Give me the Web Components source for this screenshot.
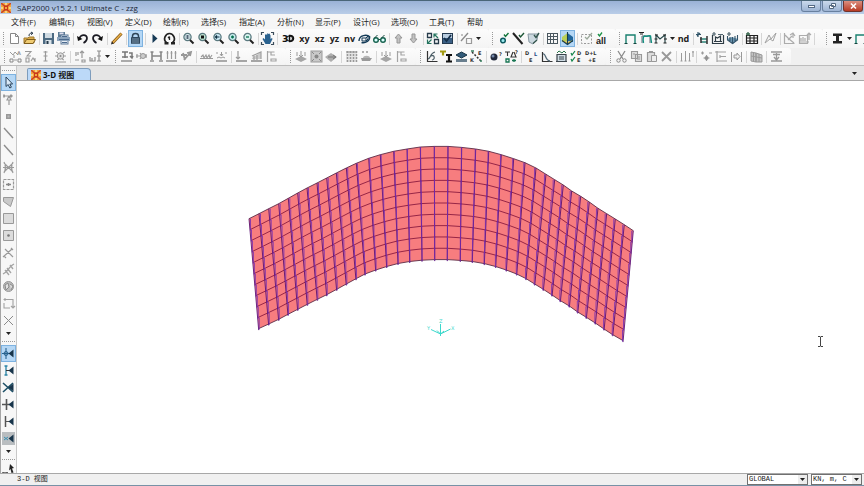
<!DOCTYPE html>
<html lang="zh-CN">
<head>
<meta charset="utf-8">
<title>SAP2000 v15.2.1 Ultimate C - zzg</title>
<style>
    html, body { margin: 0; height: 100%; }
    body {
        font-family: "Open Sans", "Noto Sans CJK SC", sans-serif;
        font-size: 8px;
        color: #222;
        background: #f1f1f1;
        overflow: hidden;
    }
</style>
</head>
<body>
<sap-app>
    <title-bar slot="top">SAP2000 v15.2.1 Ultimate C - zzg</title-bar>
    <menu-bar slot="top">
        <menu-item>文件(F)</menu-item>
        <menu-item>编辑(E)</menu-item>
        <menu-item>视图(V)</menu-item>
        <menu-item>定义(D)</menu-item>
        <menu-item>绘制(R)</menu-item>
        <menu-item>选择(S)</menu-item>
        <menu-item>指定(A)</menu-item>
        <menu-item>分析(N)</menu-item>
        <menu-item>显示(P)</menu-item>
        <menu-item>设计(G)</menu-item>
        <menu-item>选项(O)</menu-item>
        <menu-item>工具(T)</menu-item>
        <menu-item>帮助</menu-item>
    </menu-bar>

    <tool-row slot="top">
        <tool-group>
            <tool-button icon="new"></tool-button><tool-button icon="open"></tool-button>
            <tool-sep></tool-sep>
            <tool-button icon="save"></tool-button><tool-button icon="print"></tool-button>
            <tool-sep></tool-sep>
            <tool-button icon="undo"></tool-button><tool-button icon="redo"></tool-button>
            <tool-sep></tool-sep>
            <tool-button icon="pencil"></tool-button>
            <tool-sep></tool-sep>
            <tool-button icon="lock" active></tool-button>
            <tool-sep></tool-sep>
            <tool-button icon="run"></tool-button><tool-button icon="refresh"></tool-button>
            <tool-sep></tool-sep>
            <tool-button icon="zoomwin"></tool-button><tool-button icon="zoomfull"></tool-button><tool-button icon="zoomprev"></tool-button><tool-button icon="zoomin"></tool-button><tool-button icon="zoomout"></tool-button>
            <tool-sep></tool-sep>
            <tool-button icon="pan"></tool-button>
            <tool-sep></tool-sep>
            <tool-button icon="v3d" wide></tool-button>
            <tool-button label="xy view">xy</tool-button><tool-button label="xz view">xz</tool-button><tool-button label="yz view">yz</tool-button><tool-button label="named view">nv</tool-button>
            <tool-button icon="rotate"></tool-button><tool-button icon="glasses"></tool-button>
            <tool-sep></tool-sep>
            <tool-button icon="up"></tool-button><tool-button icon="down"></tool-button>
            <tool-sep></tool-sep>
            <tool-button icon="shrink"></tool-button><tool-button icon="options"></tool-button>
            <tool-sep></tool-sep>
            <tool-button icon="assign"></tool-button><drop-mark></drop-mark>
        </tool-group>
        <tool-group>
            <tool-button icon="snapjoint"></tool-button><tool-button icon="snapline"></tool-button><tool-button icon="snaparea"></tool-button>
            <tool-sep></tool-sep>
            <tool-button icon="grid"></tool-button><tool-button icon="cube" active></tool-button>
            <tool-sep></tool-sep>
            <tool-button icon="selbox"></tool-button><tool-button icon="all"></tool-button>
        </tool-group>
        <tool-group>
            <tool-button icon="frame"></tool-button><tool-button icon="deform"></tool-button><tool-button icon="forces"></tool-button><drop-mark></drop-mark>
            <tool-button label="named display">nd</tool-button>
            <tool-sep></tool-sep>
            <tool-button icon="disp1"></tool-button><tool-button icon="disp2"></tool-button><tool-button icon="disp3"></tool-button>
            <tool-sep></tool-sep>
            <tool-button icon="table"></tool-button>
            <tool-sep></tool-sep>
            <tool-button icon="flash"></tool-button>
            <tool-sep></tool-sep>
            <tool-button icon="graph1"></tool-button><tool-button icon="graph2"></tool-button>
            <tool-sep></tool-sep>
        </tool-group>
        <tool-group>
            <tool-button icon="ibeam"></tool-button><drop-mark></drop-mark>
            <tool-button icon="frame"></tool-button>
        </tool-group>
    </tool-row>

    <tool-row slot="top" second>
        <tool-group tight>
            <tool-button icon="g1"></tool-button><tool-button icon="g2"></tool-button><tool-button icon="g3"></tool-button><tool-button icon="g4"></tool-button>
            <tool-sep></tool-sep>
            <tool-button icon="g5"></tool-button><tool-button icon="g6"></tool-button><drop-mark></drop-mark>
        </tool-group>
        <tool-group>
            <tool-button icon="h1"></tool-button><tool-button icon="h2"></tool-button><tool-button icon="h3"></tool-button><tool-button icon="h4"></tool-button><tool-button icon="h5"></tool-button>
            <tool-sep></tool-sep>
            <tool-button icon="h6"></tool-button><tool-button icon="h7"></tool-button>
            <tool-sep></tool-sep>
            <tool-button icon="h8"></tool-button><tool-button icon="h9"></tool-button><tool-button icon="h10"></tool-button>
        </tool-group>
        <tool-group>
            <tool-button icon="a1"></tool-button><tool-button icon="a2"></tool-button><tool-button icon="a3"></tool-button>
            <tool-sep></tool-sep>
            <tool-button icon="a4"></tool-button><tool-button icon="a5"></tool-button>
            <tool-sep></tool-sep>
            <tool-button icon="a1"></tool-button><tool-button icon="h10"></tool-button>
        </tool-group>
        <tool-group>
            <tool-button icon="m1"></tool-button><tool-button icon="m2"></tool-button><tool-button icon="m3"></tool-button><tool-button icon="m4"></tool-button>
            <tool-sep></tool-sep>
            <tool-button icon="m5"></tool-button><tool-button icon="m6"></tool-button>
            <tool-sep></tool-sep>
            <tool-button icon="m7"></tool-button><tool-button icon="m8"></tool-button><tool-button icon="m9"></tool-button><tool-button icon="m10"></tool-button><tool-button icon="m11"></tool-button>
        </tool-group>
        <tool-group>
            <tool-button icon="cut"></tool-button><tool-button icon="copy"></tool-button><tool-button icon="paste"></tool-button><tool-button icon="del"></tool-button>
            <tool-sep></tool-sep>
            <tool-button icon="e1"></tool-button>
            <tool-sep></tool-sep>
            <tool-button icon="e2"></tool-button><tool-button icon="e3"></tool-button><tool-button icon="e4"></tool-button>
            <tool-sep></tool-sep>
            <tool-button icon="e5"></tool-button>
            <tool-sep></tool-sep>
            <tool-button icon="e6"></tool-button>
        </tool-group>
    </tool-row>

    <side-palette slot="side">
        <tool-button icon="pointer" active></tool-button>
        <tool-button icon="reshape"></tool-button>
        <tool-button icon="joint"></tool-button>
        <tool-button icon="line"></tool-button>
        <tool-button icon="line"></tool-button>
        <tool-button icon="brace"></tool-button>
        <tool-button icon="beams"></tool-button>
        <tool-button icon="poly"></tool-button>
        <tool-button icon="rect"></tool-button>
        <tool-button icon="quick"></tool-button>
        <tool-button icon="link1"></tool-button>
        <tool-button icon="link2"></tool-button>
        <tool-button icon="globe"></tool-button>
        <tool-button icon="loop"></tool-button>
        <tool-button icon="cross"></tool-button>
        <drop-mark></drop-mark>
        <tool-grip flat></tool-grip>
        <tool-button icon="snap1" active></tool-button>
        <tool-button icon="snap2"></tool-button>
        <tool-button icon="snap3"></tool-button>
        <tool-button icon="snap4"></tool-button>
        <tool-button icon="snap5"></tool-button>
        <tool-button icon="snap6"></tool-button>
        <drop-mark></drop-mark>
        <tool-grip flat></tool-grip>
        <tool-button icon="endarrow"></tool-button>
    </side-palette>

    <view-tabs>3-D 视图</view-tabs>
    <model-view></model-view>

    <status-bar slot="bottom">
        3-D 视图
        <status-select slot="right" label="Coordinate system" value="GLOBAL"></status-select>
        <status-select slot="right" label="Units" value="KN, m, C" short></status-select>
    </status-bar>
</sap-app>

<script>
// logo used by the title bar and the tab
const LOGO = `<svg viewBox="0 0 10 10" width="10" height="10" aria-hidden="true">
    <rect width="10" height="10" fill="#f3a53a"/>
    <path d="M0 0L4 3.500M10 0L6 3.500M0 10L4 6.500M10 10L6 6.500" stroke="#c9452c" stroke-width="1.600"/>
    <rect x="3" y="2.500" width="4" height="5" fill="#c8381c"/>
    <path d="M4 5h2M5 4v2" stroke="#ffd04a"/>
    <path d="M5 0v2M5 8v2M0 5h2M8 5h2" stroke="#fbe09a" stroke-width="1.500"/></svg>`;

// every icon is drawn on a 15 x 15 field
const lens = (fill, mark) => `<circle cx="6.500" cy="6" r="3.600" fill="${fill}" stroke="#5b7a80" stroke-width="1.300"/><path d="M9 9l3.500 3.500" stroke="#222" stroke-width="2"/>${mark}`;
const small = (x, y, t, c = '#333') => `<text x="${x}" y="${y}" font-family="DejaVu Sans" font-size="5" font-weight="bold" fill="${c}">${t}</text>`;
const s = (d, c = '#9a9a9a', w = 1, f = 'none') => `<path d="${d}" stroke="${c}" stroke-width="${w}" fill="${f}"/>`;
const tri = '<path d="M12.500 3.500v8l-5-4z" fill="#17344a"/>';

const ICONS = {
    new: s('M3.500 2.500h5l3 3v7h-8zM8.500 2.500v3h3', '#888', 1, '#fff'),
    open: s('M2 7h4l1-1h5v6h-10z', '#a37b2a', 1, '#d9ad4e') + s('M2 12.500l2.500-4h9l-2.500 4z', '#7e5c1b', 1, '#efcb72') + s('M7 5c0-2 1-3 3-3M9 1l2 1.200-2 1.500', '#234'),
    save: '<rect x="2" y="2" width="11" height="11" fill="#4c6a82"/><rect x="4" y="2" width="7" height="5" fill="#cfdae2"/><rect x="4.500" y="9" width="6" height="4" fill="#dbe4ea"/><rect x="5.500" y="10" width="2" height="3" fill="#25394a"/>',
    print: '<rect x="2" y="1" width="7" height="6" fill="#5b7a94"/><rect x="3.500" y="1.500" width="4" height="2" fill="#dde"/><rect x="5" y="4" width="7" height="9" fill="#e6edf5" stroke="#5d7898"/><rect x="1" y="6" width="13" height="4" fill="#8ba3bc"/>' + s('M6 5.500h5M6 11.500h5M3 8.500h10', '#4b698d'),
    undo: s('M4.500 7c1.500-3.500 7-4 7.500 0 0 2.500-1.500 4-3.500 5', '#1b1b24', 1.7) + '<path d="M2 5l1 5 4.500-2z" fill="#111"/>',
    redo: s('M10.500 7c-1.500-3.500-7-4-7.500 0 0 2.500 1.500 4 3.500 5', '#1b1b24', 1.7) + '<path d="M13 5l-1 5-4.500-2z" fill="#111"/>',
    pencil: s('M3.500 12l9-9.500', '#8a5a14', 3) + s('M4 11.500l8.500-9', '#e9b24c', 1.3) + '<path d="M2 13.500l.8-3 2 2z" fill="#222"/>',
    lock: s('M4.500 7V5c0-3.500 6-3.500 6 0v2', '#2e4457', 1.5) + '<rect x="3" y="6" width="9" height="7" rx="1" fill="#2f475d"/>' + s('M4 8h7M4 10h7M4 12h7', '#91abc0', .8),
    run: '<path d="M5.500 3l5 4.500-5 4.500z" fill="#173a56"/>',
    refresh: s('M4.500 11.500c-4-3-1-9 3-9s7 6 3 9', '#222', 1.7) + '<path d="M2.500 11h4v2.500h-4zM9 11h4v2.500h-4z" fill="#222"/>' + s('M7.500 9V5.500M6 7l1.500-1.500', '#222', 1.3),
    zoomwin: lens('#dff0f4', s('M4.500 5h4M4.500 7h4M6.500 4v4', '#567')),
    zoomfull: lens('#bfe4d0', '<rect x="5" y="4.500" width="3" height="3" fill="#111"/>'),
    zoomprev: lens('#cdebf7', s('M4.500 6h4M6 4.500L4.500 6 6 7.500', '#134', 1.2)),
    zoomin: lens('#c6eeee', s('M5 6h3M6.500 4.500v3', '#087050', 1.3)),
    zoomout: lens('#d7f3ee', s('M5 6h3', '#087050', 1.3)),
    pan: '<path d="M5.500 13l-3-5 1-1 1.500 1.500V4l1-1 1 1 .5-2 1 1 1-.5 1 2V8l1.500-1 .5 1-2.500 5z" fill="#2a628f"/>' + s('M1.500 4V1.500H4M11 1.500h2.500V4M13.500 11v2.500H11M4 13.500H1.500V11', '#3a4c5a', 1.2),
    v3d: '<text x="1" y="11" font-family="DejaVu Sans" font-size="9" font-weight="bold" fill="#111">3</text><ellipse cx="8.500" cy="7.500" rx="3" ry="2.500" fill="none" stroke="#222" stroke-width="1.100"/>' + s('M8.500 4v6.500M8 4.500c6-1 6 6 0 6', '#111', 1.5),
    rotate: s('M2 10c0-6 8-7 11-4M12.500 5.500c1 4-4 7-8 6', '#143b57', 1.4) + s('M5 10V7h4v3zM9 7l2-2v3l-2 2', '#143b57', 1),
    glasses: '<circle cx="4" cy="9" r="2.300" fill="#dff" stroke="#15614d" stroke-width="1.400"/><circle cx="11" cy="9" r="2.300" fill="#dff" stroke="#15614d" stroke-width="1.400"/>' + s('M2.500 7l3-3M9.500 7l3-3M6.500 8.500h2', '#174a40'),
    up: s('M7.500 3l3.500 4h-2v5h-3V7H4z', '#979797', 1, '#c3c3c3'),
    down: s('M7.500 12L11 8H9V3H6v5H4z', '#979797', 1, '#c3c3c3'),
    shrink: s('M2.500 2.500h4v4h-4zM9.500 8.500h4v4h-4z', '#263b4a', 1.3) + s('M9 6.500V3h3.500M9 3l4 4M2.500 8.500v4h4M3 12l3.500-3.500', '#24745e', 1.2),
    options: '<rect x="2.500" y="2.500" width="10" height="10" fill="#3a5f85" stroke="#243a50"/><path d="M3 3h9v4H3z" fill="#b9cde0"/>' + s('M4 7l2.500 3L11 4', '#16304a', 1.8),
    assign: s('M2 10L9 2', '#8a8a8a', 1.3) + s('M7.500 7.500h5v5h-5z', '#9a9a9a', 1.2, '#f8f8f8') + s('M2 4h2', '#888'),
    snapjoint: '<circle cx="7" cy="9.500" r="2.300" fill="#9ceaf0" stroke="#0e5a60" stroke-width="1.500"/>' + s('M8 3.500l1.500 2L12.500 2', '#12753a', 1.4),
    snapline: s('M2 2l9.500 11', '#222', 2) + s('M8 4l1.500 2L13 2', '#1c5535', 1.4),
    snaparea: s('M2 3h10l-1 6-4 4-4-2z', '#8595a0', 1, '#cbd8df') + s('M8 4l2 2.500L13 2M7 12.500l4-3.500', '#35564e', 1.4),
    grid: s('M2.500 2v11M5.500 2v11M8.500 2v11M12.500 2v11M2 2.500h11M2 5.500h11M2 8.500h11M2 12.500h11', '#4b5860'),
    cube: '<path d="M2 6l5.500-4v8L2 11z" fill="#b9cf58"/><path d="M7.500 2L13 6v5l-5.500-1z" fill="#20659b"/><path d="M2 9l5.500 2L13 9l-5.500 4.500z" fill="#e7bc38"/>' + s('M7.500 1v12.500M2 9.500l5.500 4L13 9.500', '#153d50', 1.1),
    selbox: '<path d="M2.500 3.500h10v9h-10z" fill="none" stroke="#999" stroke-dasharray="2 1.500"/>' + s('M6 6l2 2 5-6', '#9aa89a', 1.2),
    all: '<text x="2" y="13" font-family="Liberation Sans" font-size="9" font-weight="bold" fill="#222">all</text>' + s('M4 3l1.500 2L8 1.500', '#199144', 1.3),
    frame: s('M3 12V4h9v8', '#19806f', 1.4) + s('M1.500 12.500h3M10.500 12.500h3', '#12443e'),
    deform: s('M4 12V5h8v7', '#667') + s('M5.500 12c-1-4 0-7 1-7 3 1 4-1 6 0l1 7', '#129080', 1.4) + s('M1 1.500h5M2 3h3', '#222'),
    forces: s('M3 12V4l4 4 5-4v8', '#28484a', 1.2) + s('M2 4h3M10 4h3M1.500 8h3M11 8h3M1.500 12h3M10.500 12h3', '#222', 1.2),
    disp1: s('M3 1v5M1 3.500h5M2 5l3-3M5 8h7M6 11h6', '#33566a', 1.2) + s('M6 6v6M12 5v8', '#222', 1.4) + s('M7 8h4M7 11h4', '#2a9b80', 1.2),
    disp2: s('M2.500 4v8.500h11V4M4 10.500h8M5.500 10V6l2 1 3-2v5', '#2e3c45', 1.2) + s('M4 1v4M2 3h4M8 3.500h5', '#51656f', 1.2),
    disp3: '<path d="M2 8l5-2 6 2-5 5z" fill="#6d98b3"/>' + s('M2.500 5v4l5 3.500 5-3.500V4M7.500 6v6M5 6v4M10 5v5', '#34546a', 1.1) + s('M4 1v4M2 3h4', '#51656f', 1.2),
    table: s('M2.500 4.500h11v8h-11zM2.500 7h11M2.500 10h11M6 4.500v8M10 4.500v8', '#222', 1.2) + s('M4 1v4M2 3h4', '#37664d', 1.3),
    flash: s('M2 12l4-8 2 4 5-6-3 8-3-2z', '#a2a2a2'),
    graph1: s('M2.500 2v10.500h10M3 4l4 4 5 4M6 9l4-4M8 4l3-2 2 3M11 3v4', '#acacac', 1.2),
    graph2: s('M2.500 4.500h8v8h-8zM4 10V7M6 10V6M8 10V7M3 11h9M12 9V3M10 4l2-2 2 2', '#acacac', 1.2),
    ibeam: '<path d="M3 2.500h9v2.500H9v5h3v2.500H3V10h3V5H3z" fill="#222"/>',

    g1: s('M2 3l3 3 2-3 3 3M6 6v3M6 11h3') + small(9, 6, 'A', '#999') + s('M2 10h3v3H2zM10 10h3v3h-3z', '#888'),
    g2: s('M2 2.500h6L4 7h4M3 9v4h3V9zM8 12l2-3 2 3M12 9v4', '#999', 1.1),
    g3: s('M7.500 2v10M5.500 3h4M5.500 7h4M5.500 12h4', '#999', 1.2),
    g4: s('M3 3l2 1M12 3l-2 1M2 7h2M11 7h2M4 11l2-1M11 11l-2-1M2 13h11') + '<circle cx="7.500" cy="7" r="3.200" fill="#ddd" stroke="#999"/><circle cx="7.500" cy="7" r="1" fill="#888"/>',
    g5: s('M3 3v4M5 3v3M9 2v7M7 4l2-2 2 2M2 11h4M9 11h3v2H9z', '#999', 1.2),
    g6: s('M9 2h4M11 2v10M9 7h4M9 12h4M2 8v4h5V8M4 9v3', '#8f8f8f', 1.2),
    h1: s('M3 3h6M6 3v6M3 8h6M10 4h3v5M11 7l2 2 1-2', '#777', 1.5) + '<rect x="2" y="11" width="11" height="2" fill="#aaa"/>',
    h2: s('M2 7h11M3 5v4M6 4l2 3-2 3M12 5v4', '#999', 1.2) + '<circle cx="9" cy="7" r="2.500" fill="#ccc" stroke="#999"/>',
    h3: s('M3 3v8M12 3v8M3 7h9M1.500 3h3M10.500 3h3', '#888', 1.6) + '<path d="M1 11h4v2H1zM10 11h4v2h-4z" fill="#aaa"/>',
    h4: s('M3.500 2v8M7.500 2v8M11.500 2v8M2.500 4h2M6.500 4h2M10.500 4h2', '#999', 1.2) + '<rect x="2" y="11" width="11" height="2" fill="#aaa"/>',
    h5: s('M2 6h6M5 11l7-8M8 4l4-1-1 4M4 4l2 7', '#989898', 1.8),
    h6: s('M2 8l2-2 1 3 2-3 1 3 2-3 1 3 2-3M1 9.500h13', '#999', 1.1),
    h7: s('M3 3v2M6 5l1.500 2L9 5M12 3v2M7.500 3v4M3 9l2-1 2 1 2-1 2 1') + '<rect x="2" y="11" width="11" height="2" fill="#aaa"/>',
    h8: s('M4 2v8M2 8l2 2 2-2', '#999', 1.2) + '<rect x="2" y="11" width="11" height="2" fill="#a5a5a5"/>',
    h9: '<path d="M3 9l9-6v7H3z" fill="#ccc"/>' + s('M3 7l9-4v7M5 7v4M8 6v5', '#a0a0a0', 1.2) + '<rect x="2" y="11" width="11" height="2" fill="#a5a5a5"/>',
    h10: s('M3.500 2v11M3.500 3h7M7 3v3h4M7 10h5v2H7z', '#a3a3a3', 1.2),
    a1: '<path d="M1 10l6-3 6 3-6 3z" fill="#a5a5a5"/>' + s('M7 2v6M5 6l2 2 2-2M3 3v4M11 3v4'),
    a2: '<rect x="2" y="2" width="11" height="11" fill="#c9c9c9" stroke="#999"/><circle cx="7.500" cy="7.500" r="2" fill="#888"/>' + s('M3 3l2 2M12 3l-2 2M3 12l2-2M12 12l-2-2', '#888'),
    a3: '<path d="M1 8l6-4 6 4-6 5z" fill="#aeaeae"/>' + s('M4 8h7M9 6l3 2-3 2', '#777'),
    a4: '<path d="M2 2h11v11H2z" fill="#e4e4e4"/><path d="M3.500 2v11M6.500 2v11M9.500 2v11M12.500 2v11" stroke="#999" stroke-width="1.500" stroke-dasharray="2 1"/>' + s('M2 3h11'),
    a5: '<path d="M2 9h11l-2 3H3z" fill="#9a9a9a"/><path d="M4 9c0-3 7-3 7 0" fill="#b5b5b5"/>' + s('M3 3h2M7 3h2', '#999', 1.5),
    m1: s('M3.500 2v10.500h10', '#333', 1.2) + s('M4 10c3-1 2-6 7-7M7 7c3-2 5 3 1 4', '#4b5d66', 1.2),
    m2: s('M1 2.500h6M4 2.500v4', '#a39a12', 2.2) + s('M7 6h6M10 6v6M7 12.500h6', '#111', 2.2),
    m3: '<path d="M2 6l5.500-3L13 6 7.500 9z" fill="#315a79" stroke="#183344"/><rect x="2" y="10" width="11" height="3" fill="#697f8f"/>',
    m4: '<path d="M3 3l9 9" stroke="#333" stroke-width="1.500" stroke-dasharray="2 1.500"/>' + small(1, 13, 'K') + small(9, 6, 'E') + s('M2 2h3M11 12h2', '#398060', 1.6),
    m5: '<circle cx="5" cy="8" r="3.500" fill="#222a3c"/><circle cx="4" cy="7" r="1.500" fill="#7589aa"/>' + small(10, 7, '?'),
    m6: s('M1 3h5M3.500 3v4M9 3L7 8h5l-2-5', '#333', 1.1) + s('M2 10h3v3H2zM8 11.500h4M10 10v3', '#187653', 1.3) + small(11, 5, '?'),
    m7: small(1, 6, 'D') + small(10, 7, 'L', '#274b87') + small(5, 13, 'E'),
    m8: s('M3.500 3v9.500h10', '#333', 1.2) + s('M4 5c3-1 2 7 7 7', '#526978', 1.3),
    m9: s('M3 5.500h9v7H3zM5 8h5M5 10h5M2 12.500h11', '#3b444b', 1.2, '#cfdce4') + s('M3 4l2-2 3 2 2-2 2 2', '#287248'),
    m10: s('M2 4l1 2 3-4M2 10l1 2 3-4', '#12844a', 1.2) + small(8, 6, 'D') + small(8, 13, 'E'),
    m11: small(1, 6, 'D+L') + small(4, 13, '+E'),
    cut: s('M4 2l5 8M11 2L6 10', '#8a8a8a', 1.3) + '<circle cx="4.500" cy="11.500" r="1.700" fill="none" stroke="#888"/><circle cx="10.500" cy="11.500" r="1.700" fill="none" stroke="#888"/>',
    copy: s('M2.500 2.500h6v7h-6zM6.500 5.500h6v7h-6zM8 8h3M8 10h3M4 5h2', '#999', 1.1, '#ddd'),
    paste: s('M3.500 3.500h7v9h-7zM5 2.500h4', '#999', 1.2, '#ddd') + s('M7.500 6.500h5v6h-5z', '#999', 1, '#eee'),
    del: s('M3 3l9 9M12 3l-9 9', '#999', 1.8),
    e1: s('M2.500 4v8M6.500 2v10M10.500 4v8M14 2v6M1.500 12h2M5.500 12h2M9.500 12h2M13 3h2'),
    e2: s('M2 4h3M3.500 2.500v3M10 4h3M7.500 6v6M4.500 9h6', '#9a9a9a', 1.2) + '<circle cx="7.500" cy="9" r="2" fill="#909090"/>',
    e3: s('M3 2v11M1 3h11M3 12h10M6 7.500h6M6 6v3', '#a2a2a2', 1.2),
    e4: s('M2.500 3v10M12.500 3v10M5 6h3V4l3 3.500L8 11V9H5z', '#999', 1, '#eee'),
    e5: '<path d="M2 3l5 1v9l-5-1zM7 4l6 2v7H7z" fill="#c4c4c4" stroke="#999"/>' + s('M2 7l11 2M4.500 3v10M10 5v8'),
    e6: s('M2 3h11M2 12h11M7.500 4v6M5 8l2.500 3L10 8M4 5.500h7', '#999', 1.3),

    pointer: s('M5 2v9.500l2.200-2 1.600 3.500 1.600-.8-1.600-3.200h2.800z', '#29435c', 1, '#dcebf8'),
    reshape: s('M3 4h9M8 4L6 8h4L8 4M8 8v5', '#999', 1.2) + s('M3 2.500v3M10 2.500v3', '#888', 1.5),
    joint: '<rect x="5" y="5" width="5" height="5" fill="#999"/><rect x="6.500" y="6.500" width="2" height="2" fill="#bbb"/>',
    line: s('M3 2l9 10', '#8d8d8d', 1.4),
    brace: s('M3 3l9 9M12 3l-9 9M2 7.500h11M3 2c2 4 2 7 0 11M12 2c-2 4-2 7 0 11', '#9a9a9a', 1.2),
    beams: '<rect x="2.500" y="2.500" width="10" height="10" fill="none" stroke="#999" stroke-width="1.200" stroke-dasharray="3 1"/>' + s('M5 7.500h5M7.500 6v3', '#888', 1.5),
    poly: s('M2.500 3.500h10l-3 9-7-5z', '#999', 1, '#c9c9c9'),
    rect: s('M2.500 2.500h10v10h-10z', '#999', 1, '#dcdcdc'),
    quick: s('M2.500 2.500h10v10h-10z', '#999', 1, '#dcdcdc') + '<circle cx="7.500" cy="7.500" r="1.300" fill="#777"/>',
    link1: s('M2 12l9-8M4 4l8 8M10 3l2 2M3 11l2 2', '#999', 1.2),
    link2: s('M2 12l3-2 5-6 3-2M4 8l4 5M6 6l4 5M9 3l3 4', '#a4a4a4', 1.3),
    globe: '<circle cx="7.500" cy="7.500" r="5" fill="#bdbdbd" stroke="#999"/>' + s('M4 6l3-2 1 4-3 3zM9 5l3 2-2 4', '#8a8a8a', 1, '#e1e1e1'),
    loop: s('M4 2v3M2.500 3.500H12v8M10 10l2 2 2-2M3 7v5h6', '#a2a2a2', 1.1),
    cross: s('M3 3l9 9M12 3l-9 9', '#8a8a8a'),
    snap1: s('M1 7.500h7M5 2v11', '#28638f', 1.1) + '<circle cx="5" cy="7.500" r="2" fill="none" stroke="#28638f"/>' + tri,
    snap2: s('M5 3v9M3.500 3h3M3.500 12h3', '#2883a5', 1.3) + s('M5 7.500h4', '#333') + tri,
    snap3: s('M2 3l10 9M12 3L2 12', '#1d5067', 1.6) + tri,
    snap4: s('M1 7.500h9M5.500 2v11', '#555', 1.6) + tri,
    snap5: s('M4.500 2v11', '#555', 1.5) + s('M5 7.500h4', '#555') + tri,
    snap6: '<rect x="1" y="1" width="13" height="13" fill="#b9bdc0"/>' + s('M3 6l4 3M7 6l-4 3', '#3a90b4') + tri,
    endarrow: s('M2 9h5M2 8v3M6 8v3', '#555', 1.5) + '<path d="M9 0l4 4-2 .5 1.500 4-2 .5-1-4-1.500 1.500z" fill="#222"/>'
};

const define = (tag, html, setup) => customElements.define(tag, class extends HTMLElement {
    constructor() {
        super();
        this.attachShadow({ mode: 'open' });
    }
    connectedCallback() {
        this.shadowRoot.innerHTML = html;
        if (setup) setup(this.shadowRoot, this);
    }
});

define('sap-app', `
<style>
    :host { display: flex; flex-direction: column; height: 100vh; }
    .work { display: flex; flex: 1; min-height: 0; }
    .main { display: flex; flex-direction: column; flex: 1; min-width: 0; background: #fff; }
</style>
<slot name="top"></slot>
<div class="work"><slot name="side"></slot><div class="main"><slot></slot></div></div>
<slot name="bottom"></slot>`);

define('title-bar', `
<style>
    :host {
        display: flex; align-items: center; gap: 6px; height: 14px; padding: 0 1px;
        box-sizing: border-box; border-top: 1px solid #4a6678; color: #1b2738;
        background: linear-gradient(#9ab2d6, #b9cde8);
    }
    .name { flex: 1; line-height: 12px; white-space: nowrap; }
    .ctrl { display: flex; gap: 1px; align-self: flex-start; }
    button {
        width: 20px; height: 11px; padding: 0; display: grid; place-items: center;
        border: 1px solid #68809f; border-top: 0; border-radius: 0 0 3px 3px;
        background: linear-gradient(#cad9ec, #9db4d3);
    }
    .close { background: linear-gradient(#dc8f80, #b83a24); border-color: #70332c; }
</style>
${LOGO}<span class="name"><slot></slot></span>
<div class="ctrl">
    <button aria-label="Minimize"><svg width="9" height="8"><rect x="1.500" y="3.500" width="6" height="2" fill="#fff" stroke="#566b85"/></svg></button>
    <button aria-label="Restore"><svg width="9" height="8"><path d="M3.500 1.500h4v3h-4zM1.500 3.500h4v3h-4z" fill="#fff" stroke="#52677f"/></svg></button>
    <button class="close" aria-label="Close"><svg width="9" height="8"><path d="M2 1.500l5 5M7 1.500l-5 5" stroke="#fff" stroke-width="1.600"/></svg></button>
</div>`);

define('menu-bar', `
<style>
    :host { display: flex; height: 15px; padding-left: 11px; background: #f6f6f6; }
</style>
<slot></slot>`, (root, el) => el.setAttribute('role', 'menubar'));

define('menu-item', `
<style>
    :host { display: block; width: 38px; }
    button { border: 0; padding: 0; background: none; font: inherit; color: inherit; line-height: 16px; white-space: nowrap; }
</style>
<button role="menuitem"><slot></slot></button>`);

define('tool-row', `
<style>
    :host { --sep: 4px; --grip: 7px; display: flex; height: 19px; background: #f0f0f0; overflow: hidden; flex: none; }
    :host([second]) { --sep: 5px; --grip: 8px; height: 18px; border-bottom: 1px solid #bdbdbd; box-sizing: border-box; }
</style>
<slot></slot>`);

define('tool-group', `
<style>
    :host {
        display: flex; flex: none; align-items: center; padding-right: 7px;
        background: linear-gradient(#fcfcfc, #f4f4f4); border-radius: 0 3px 3px 0;
    }
    :host([tight]) { padding-right: 0; }
</style>
<tool-grip></tool-grip><slot></slot>`);

define('tool-grip', `
<style>
    :host { display: flex; justify-content: center; align-items: center; width: var(--grip); height: 100%; flex: none; }
    i { width: 1px; height: 14px; background: repeating-linear-gradient(#999 0 1px, transparent 1px 2px); }
    :host([flat]) { width: 100%; height: 8px; }
    :host([flat]) i { width: 14px; height: 1px; background: repeating-linear-gradient(90deg, #999 0 1px, transparent 1px 2px); }
</style><i></i>`);

define('tool-sep', `
<style>
    :host { display: flex; justify-content: center; width: var(--sep); flex: none; }
    i { width: 1px; height: 12px; background: #d6d6d6; }
</style><i></i>`);

define('drop-mark', `
<style>
    :host { display: flex; justify-content: center; align-items: center; width: 8px; height: 8px; flex: none; }
</style>
<svg width="5" height="3" aria-hidden="true"><path d="M0 0h5L2.500 3z" fill="#222"/></svg>`);

define('tool-button', `
<style>
    :host { display: block; flex: none; width: 15px; height: 17px; }
    :host([wide]) { width: 18px; }
    button {
        width: 100%; height: 100%; padding: 0; border: 0; background: none;
        display: grid; place-items: center;
        font: bold 9px/15px "Open Sans", sans-serif; color: #222;
    }
    :host([active]) button { background: #b5d7f5; box-shadow: inset 0 0 0 1px #7db2e0; }
    svg { display: block; }
</style>
<button><slot></slot></button>`, (root, el) => {
    const icon = el.getAttribute('icon');
    const button = root.querySelector('button');
    button.setAttribute('aria-label', el.getAttribute('label') || icon);
    if (icon) {
        button.innerHTML = `<svg viewBox="0 0 15 15" width="15" height="15" aria-hidden="true">${ICONS[icon]}</svg>`;
    }
});

define('side-palette', `
<style>
    :host {
        display: flex; flex-direction: column; align-items: center; width: 17px; flex: none;
        box-sizing: border-box; overflow: hidden; background: #f7f7f7;
        border-left: 1px solid #a5a5a5; border-right: 1px solid #c8c8c8;
    }
</style>
<tool-grip flat></tool-grip><slot></slot>`);

define('view-tabs', `
<style>
    :host {
        display: flex; align-items: flex-end; justify-content: space-between; height: 15px; flex: none;
        box-sizing: border-box; padding: 0 6px 0 10px; background: #e5e5e5; border-bottom: 1px solid #a8a8a8;
    }
    button {
        display: flex; align-items: center; gap: 2px; width: 64px; height: 12px; padding: 0 3px; box-sizing: border-box;
        border: 1px solid #7d9cbc; border-bottom: 0; border-radius: 2px 4px 0 0; background: #bcd9f8;
        font: bold 8px/11px "Open Sans", "Noto Sans CJK SC", sans-serif; color: #111; white-space: nowrap;
    }
    drop-mark { align-self: center; }
</style>
<button>${LOGO}<span><slot></slot></span></button><drop-mark></drop-mark>`);

// top and bottom ends of each column line of the shell
const TOP = [[249,218.7],[259,213.7],[268.7,208.7],[278.7,203.7],[288.3,198.3],[297.7,193],[307,188],[317,183],[326.7,178],[336.3,173],[346.3,168],[356.3,163.3],[368.7,158.3],[380.3,154.7],[393.7,151.3],[407,149],[420.3,147],[434.3,146.4],[448,146.4],[461.7,147.4],[475.7,149],[488.7,151.3],[501.3,154.7],[513.7,158.7],[525,162.7],[536,168],[546,174.3],[554.7,179.7],[563.3,185],[571.7,191],[580.7,196.3],[589.3,202],[598,208.3],[606.7,213.7],[615.3,219],[624.3,224.7],[633.3,230.7]];
const BASE = [[258.7,328.6],[268.7,324],[278.7,319.3],[288,314.3],[297.7,309.3],[307.3,304.3],[317.3,299.3],[326.7,294.7],[336.7,289.3],[346.3,284],[356,278.7],[365,274],[375.7,270],[386.7,266.5],[398,263.5],[409.7,261.5],[422,260.2],[434.7,259.6],[447.3,259.6],[460.3,260.4],[472.3,261.5],[484.3,263.6],[495.7,266.5],[506.3,270],[516.7,274],[526,278.6],[534.7,284],[543.3,289.3],[552,295],[560.3,300.6],[569.3,306],[577.7,312],[586.3,317.3],[595.3,323],[604,329],[612.7,334.7],[623,340.6]];

define('model-view', `
<style>
    :host { display: block; flex: 1; min-height: 0; background: #fff; }
    svg { display: block; width: 100%; height: 100%; }
</style>
<svg viewBox="17 81 847 392" role="img" aria-label="3-D model">
    <g id="mesh" fill="none" stroke-linejoin="round"></g>
    <g stroke="#3cd8cc" fill="none">
        <path d="M440.500 324v10L431 329.500M440.500 334l10-5"/>
        <path d="M437 330.500l3.500 3.500 3.500-3M440.500 334v2"/>
    </g>
    <g fill="#3cd8cc" font-family="DejaVu Sans" font-size="5">
        <text x="439" y="323">Z</text><text x="427" y="330">Y</text><text x="451" y="330">X</text>
    </g>
    <path d="M818 336.500h2l.5.500.5-.5h2M818 346.500h2l.5-.5.5.500h2M820.500 337v9" stroke="#444" fill="none"/>
</svg>`, root => {
    const rows = 10;
    const at = (i, k) => [
        TOP[i][0] + (BASE[i][0] - TOP[i][0]) * k / rows,
        TOP[i][1] + (BASE[i][1] - TOP[i][1]) * k / rows
    ];
    let out = `<path d="M${TOP.join('L')}L${[...BASE].reverse().join('L')}Z" fill="#f77d7f"/>`;
    for (let k = 0; k <= rows; k++) {
        out += `<path d="M${TOP.map((p, i) => at(i, k)).join('L')}" stroke="${k % rows ? '#8b1b3f' : '#5c2a45'}" stroke-width=".9"/>`;
    }
    TOP.forEach((p, i) => {
        const b = BASE[i];
        // away from the crown each panel shows a second edge that hangs straighter than the first
        const side = Math.max(-1, Math.min(1, (17.5 - i) / 8)) * 1.5;
        out += `<path d="M${p}L${b[0]} ${b[1] + 1.5}" stroke="#5a1270" stroke-width=".9"/>`;
        for (let k = 0; k < rows; k++) {
            const [x, y] = at(i, k);
            const [x2, y2] = at(i, k + 1);
            out += `<path d="M${x + side} ${y}L${x2 + side / 3} ${y2 + 1}" stroke="#7029b5" stroke-width=".8"/>`;
        }
    });
    root.querySelector('#mesh').innerHTML = out;
});

define('status-bar', `
<style>
    :host {
        display: flex; align-items: center; justify-content: space-between; height: 13px; flex: none;
        box-sizing: border-box; padding: 0 2px 0 17px; background: #f0f0f0;
        border-top: 1px solid #a8a8a8; border-bottom: 1px solid #7892a6;
        font: 7px/11px "Liberation Mono", "Noto Sans CJK SC", monospace;
    }
    .right { display: flex; gap: 3px; }
</style>
<span><slot></slot></span><div class="right"><slot name="right"></slot></div>`);

define('status-select', `
<style>
    :host { display: flex; position: relative; width: 61px; height: 11px; }
    :host([short]) { width: 51px; }
    select {
        appearance: none; width: 100%; height: 11px; padding: 0 0 0 1px; box-sizing: border-box; margin: 0;
        border: 1px solid #707070; border-radius: 0; background: #fff; color: #222; font: inherit; line-height: 9px;
    }
    i {
        position: absolute; right: 1px; top: 1px; bottom: 1px; width: 9px; display: grid; place-items: center;
        background: #ededed; pointer-events: none;
    }
</style>
<select><option></option></select><i><drop-mark></drop-mark></i>`, (root, el) => {
    root.querySelector('select').setAttribute('aria-label', el.getAttribute('label'));
    root.querySelector('option').textContent = el.getAttribute('value');
});
</script>
</body>
</html>
